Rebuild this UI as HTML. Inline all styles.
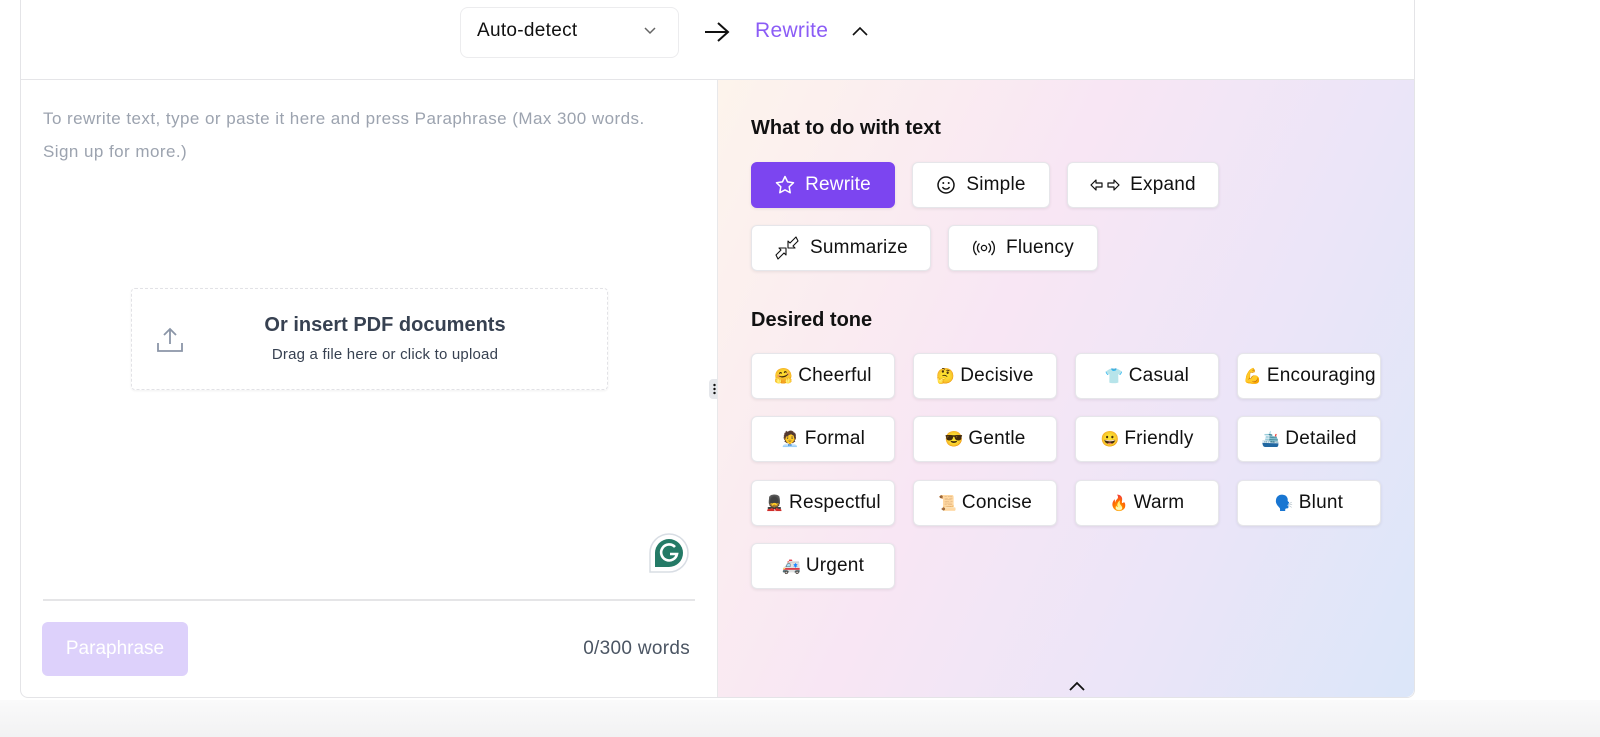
<!DOCTYPE html>
<html><head><meta charset="utf-8"><style>
*{box-sizing:border-box;margin:0;padding:0}
body{width:1600px;height:737px;overflow:hidden;background:#fff;font-family:"Liberation Sans","Noto Color Emoji",sans-serif;position:relative;color:#111}
.bg{position:absolute;left:0;top:700px;width:1600px;height:37px;background:linear-gradient(#fafafa,#f2f2f3)}
.card{position:absolute;left:20px;top:-10px;width:1395px;height:708px;border:1px solid #e4e4e7;border-radius:0 0 8px 8px;background:#fff;overflow:hidden}
.hline{position:absolute;left:20px;top:79px;width:1395px;height:1px;background:#e5e5e8}
.right{position:absolute;left:717px;top:80px;width:697px;height:617px;background:linear-gradient(115deg,#fdf4ec 0%,#f8e6f4 40%,#ebe5f8 70%,#dbe6f9 100%);border-left:1px solid #e8e8ea;border-radius:0 0 8px 0}
.abs{position:absolute}
.sel{left:460px;top:7px;width:219px;height:51px;border:1px solid #ececee;border-radius:8px;background:#fff}
.btn{position:absolute;height:46px;background:#fff;border:1px solid #e6e6ea;border-radius:6px;box-shadow:0 1px 3px rgba(0,0,0,.08);display:flex;align-items:center;justify-content:center;font-size:19px;letter-spacing:0.2px;color:#111;white-space:nowrap;overflow:hidden}
.btn svg{margin-right:10px}
.btn i{font-style:normal;font-size:15px;margin-right:5px}
.t{width:144px}
h3{position:absolute;font-size:20px;font-weight:bold;color:#111}
</style></head><body>
<div class="bg"></div>
<div class="card"></div>
<div class="hline"></div>
<div class="abs sel"></div>
<div class="abs" style="left:477px;top:20px;font-size:19px;color:#111;letter-spacing:0.3px">Auto-detect</div>
<svg class="abs" style="left:643px;top:26px" width="14" height="10" viewBox="0 0 14 10"><path d="M2 2l5 5 5-5" fill="none" stroke="#666" stroke-width="1.5"/></svg>
<svg class="abs" style="left:703px;top:20px" width="28" height="24" viewBox="0 0 28 24"><path d="M2 12h23M15 3l10 9-10 9" fill="none" stroke="#111" stroke-width="2"/></svg>
<div class="abs" style="left:755px;top:19px;font-size:21px;color:#8b5cf6;letter-spacing:0.3px">Rewrite</div>
<svg class="abs" style="left:851px;top:25px" width="18" height="12" viewBox="0 0 18 12"><path d="M2 10l7-7 7 7" fill="none" stroke="#111" stroke-width="1.6"/></svg>

<div class="abs" style="left:43px;top:102px;font-size:17px;line-height:33px;color:#9ca3af;letter-spacing:0.45px">To rewrite text, type or paste it here and press Paraphrase (Max 300 words.<br>Sign up for more.)</div>

<div class="abs" style="left:131px;top:288px;width:477px;height:102px;border:1px dashed #e2e2e6;border-radius:4px;box-shadow:0 1px 2px rgba(0,0,0,.06)"></div>
<svg class="abs" style="left:156px;top:326px" width="28" height="28" viewBox="0 0 28 28"><path d="M14 3v15M8 9l6-6 6 6M2 17v8h24v-8" fill="none" stroke="#8b95a7" stroke-width="1.8"/></svg>
<div class="abs" style="left:200px;top:314px;width:370px;text-align:center;font-size:20px;font-weight:bold;color:#374151">Or insert PDF documents</div>
<div class="abs" style="left:200px;top:346px;width:370px;text-align:center;font-size:15px;color:#374151;letter-spacing:0.2px">Drag a file here or click to upload</div>

<div class="abs" style="left:709px;top:379px;width:10px;height:20px;background:#e5e7eb;border-radius:4px 0 0 4px"></div>
<div class="abs" style="left:713px;top:383px;width:3px;height:12px;background:radial-gradient(circle,#111 1px,transparent 1.4px) 0 0/3px 4px"></div>

<svg class="abs" style="left:648px;top:532px" width="42" height="42" viewBox="0 0 42 42"><path d="M21 2a19 19 0 1 1 0 38H2V21A19 19 0 0 1 21 2z" fill="#fff" stroke="#d8dde4" stroke-width="1.5"/><path d="M21 7a14 14 0 1 1 0 28H7V21A14 14 0 0 1 21 7z" fill="#247a66"/><path d="M27 15a8 8 0 1 0 2 7h-7" fill="none" stroke="#fff" stroke-width="2.6"/></svg>

<div class="abs" style="left:43px;top:599px;width:652px;height:2px;background:#e5e5e7"></div>
<div class="abs" style="left:42px;top:622px;width:146px;height:54px;background:#ddd1fb;border-radius:6px;color:#fff;font-size:19px;display:flex;align-items:center;justify-content:center">Paraphrase</div>
<div class="abs" style="left:530px;top:638px;width:160px;text-align:right;font-size:19px;color:#4b5563;letter-spacing:0.3px">0/300 words</div>

<div class="right"></div>
<h3 style="left:751px;top:117px">What to do with text</h3>
<div class="btn" style="left:751px;top:162px;width:144px;background:#7c45f0;border-color:#7c45f0;color:#fff"><svg width="20" height="20" viewBox="0 0 20 20"><path d="M10 1.5l2.6 5.4 5.9.8-4.3 4.1 1 5.9L10 14.9l-5.2 2.8 1-5.9L1.5 7.7l5.9-.8z" fill="none" stroke="#fff" stroke-width="1.5" stroke-linejoin="round"/></svg>Rewrite</div>
<div class="btn" style="left:912px;top:162px;width:138px"><svg width="20" height="20" viewBox="0 0 20 20"><circle cx="10" cy="10" r="8" fill="none" stroke="#111" stroke-width="1.5"/><circle cx="7.3" cy="8" r="1" fill="#111"/><circle cx="12.7" cy="8" r="1" fill="#111"/><path d="M6.5 12a4 4 0 0 0 7 0" fill="none" stroke="#111" stroke-width="1.4"/></svg>Simple</div>
<div class="btn" style="left:1067px;top:162px;width:152px"><svg width="30" height="14" viewBox="0 0 30 14"><path d="M1 7l5-5v3h6v4H6v3z M29 7l-5-5v3h-6v4h6v3z" fill="none" stroke="#111" stroke-width="1.2" stroke-linejoin="round"/></svg>Expand</div>
<div class="btn" style="left:751px;top:225px;width:180px"><svg width="26" height="26" viewBox="0 0 26 26"><path d="M4 24l-2-4 5-5-2-2h7v7l-2-2-5 5z M22 2l2 4-5 5 2 2h-7V6l2 2 5-5z" fill="none" stroke="#111" stroke-width="1.1" stroke-linejoin="round"/></svg>Summarize</div>
<div class="btn" style="left:948px;top:225px;width:150px"><svg width="24" height="16" viewBox="0 0 24 16"><circle cx="12" cy="8" r="2.6" fill="none" stroke="#111" stroke-width="1.3"/><path d="M7.5 3.5a6 6 0 0 0 0 9M16.5 3.5a6 6 0 0 1 0 9M4.5 1a10 10 0 0 0 0 14M19.5 1a10 10 0 0 1 0 14" fill="none" stroke="#111" stroke-width="1.3"/></svg>Fluency</div>

<h3 style="left:751px;top:309px">Desired tone</h3>
<div class="btn t" style="left:751px;top:353px"><i>🤗</i>Cheerful</div>
<div class="btn t" style="left:913px;top:353px"><i>🤔</i>Decisive</div>
<div class="btn t" style="left:1075px;top:353px"><i>👕</i>Casual</div>
<div class="btn t" style="left:1237px;top:353px;justify-content:flex-start;padding-left:5px"><i>💪</i>Encouraging</div>
<div class="btn t" style="left:751px;top:416px"><i>🧑‍💼</i>Formal</div>
<div class="btn t" style="left:913px;top:416px"><i>😎</i>Gentle</div>
<div class="btn t" style="left:1075px;top:416px"><i>😀</i>Friendly</div>
<div class="btn t" style="left:1237px;top:416px"><i>🛳</i>Detailed</div>
<div class="btn t" style="left:751px;top:480px"><i>💂</i>Respectful</div>
<div class="btn t" style="left:913px;top:480px"><i>📜</i>Concise</div>
<div class="btn t" style="left:1075px;top:480px"><i>🔥</i>Warm</div>
<div class="btn t" style="left:1237px;top:480px"><i>🗣</i>Blunt</div>
<div class="btn t" style="left:751px;top:543px"><i>🚑</i>Urgent</div>
<svg class="abs" style="left:1068px;top:680px" width="18" height="12" viewBox="0 0 18 12"><path d="M2 10l7-7 7 7" fill="none" stroke="#111" stroke-width="1.8"/></svg>
</body></html>
